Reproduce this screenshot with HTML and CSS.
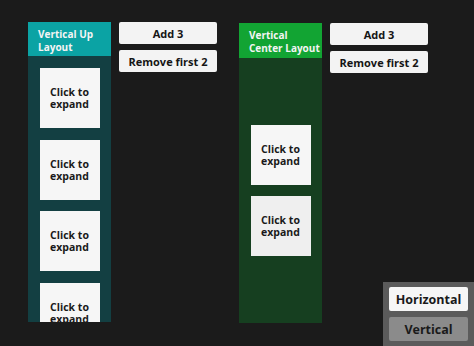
FILE: index.html
```html
<!doctype html>
<html lang="en">
<head>
  <meta charset="UTF-8" />
  <meta name="viewport" content="width=device-width, initial-scale=1.0" />
  <title>Layouts</title>
  <link rel="stylesheet" href="styles.css">
</head>
<body>

<section class="wrapper">
  <!--Vertical up-->
  <div class="group">
    <div class="panel panel-up">
      <div class="panel-head">Vertical Up Layout</div>
      <div class="panel-body">
        <div class="item">Click to expand</div>
        <div class="item">Click to expand</div>
        <div class="item">Click to expand</div>
        <div class="item">Click to expand</div>
      </div>
    </div>
    <div class="controls">
      <button class="btn">Add 3</button>
      <button class="btn">Remove first 2</button>
    </div>
  </div>

  <!--Vertical center-->
  <div class="group group-center">
    <div class="panel panel-center">
      <div class="panel-head">Vertical Center Layout</div>
      <div class="panel-body">
        <div class="item">Click to expand</div>
        <div class="item item-grey">Click to expand</div>
      </div>
    </div>
    <div class="controls">
      <button class="btn">Add 3</button>
      <button class="btn">Remove first 2</button>
    </div>
  </div>
</section>

<div class="switch">
  <button class="switch-btn active">Horizontal</button>
  <button class="switch-btn">Vertical</button>
</div>

</body>
</html>
```

FILE: styles.css
```css
* {
  box-sizing: border-box;
}
html, body {
  margin: 0;
  padding: 0;
  height: 100%;
}
body {
  background: #1b1b1b;
  font-family: "Open Sans", "Liberation Sans", sans-serif;
  font-weight: 700;
  overflow: hidden;
}
.wrapper {
  display: flex;
  gap: 22px;
  padding: 22px 0 0 28px;
}
.group {
  display: flex;
  align-items: flex-start;
  gap: 8px;
}
.group-center {
  padding-top: 1px;
}
/*Panel*/
.panel {
  width: 83px;
  height: 300px;
  display: flex;
  flex-direction: column;
  overflow: hidden;
}
.panel-head {
  height: 34px;
  padding: 6px 1px 0 10px;
  font-size: 10px;
  line-height: 13px;
  color: #f4f4f4;
  flex-shrink: 0;
}
.panel-up .panel-head {
  background: #0ba3a4;
}
.panel-up .panel-body {
  background: #133f42;
  justify-content: flex-start;
  padding-top: 12px;
}
.panel-center .panel-head {
  background: #12a433;
  height: 35px;
}
.panel-center .panel-body {
  background: #163f20;
  justify-content: center;
}
.panel-body {
  flex: 1;
  display: flex;
  flex-direction: column;
  align-items: center;
  gap: 11.5px;
  min-height: 0;
}
.item {
  width: 60px;
  height: 60px;
  flex-shrink: 0;
  background: #f6f6f6;
  color: #1a1a1a;
  font-size: 10.5px;
  line-height: 12px;
  padding: 0 8px;
  display: flex;
  align-items: center;
  justify-content: center;
  text-align: center;
}
.item-grey {
  background: #efefef;
}
/*Buttons*/
.controls {
  display: flex;
  flex-direction: column;
  gap: 6px;
}
.btn {
  width: 98px;
  height: 22px;
  border: none;
  border-radius: 2px;
  background: #f3f3f3;
  color: #151515;
  font-family: inherit;
  font-weight: 700;
  font-size: 11px;
  padding: 0;
}
/*Layout switch*/
.switch {
  position: fixed;
  right: 0;
  bottom: 0;
  width: 91px;
  padding: 5px 6px 5px 6px;
  background: #5b5b5b;
  display: flex;
  flex-direction: column;
  gap: 6px;
}
.switch-btn {
  height: 24px;
  border: none;
  border-radius: 2px;
  background: #8b8b8b;
  color: #1a1a1a;
  font-family: inherit;
  font-weight: 700;
  font-size: 12.5px;
  padding: 0;
}
.switch-btn.active {
  background: #f6f6f6;
}
```
